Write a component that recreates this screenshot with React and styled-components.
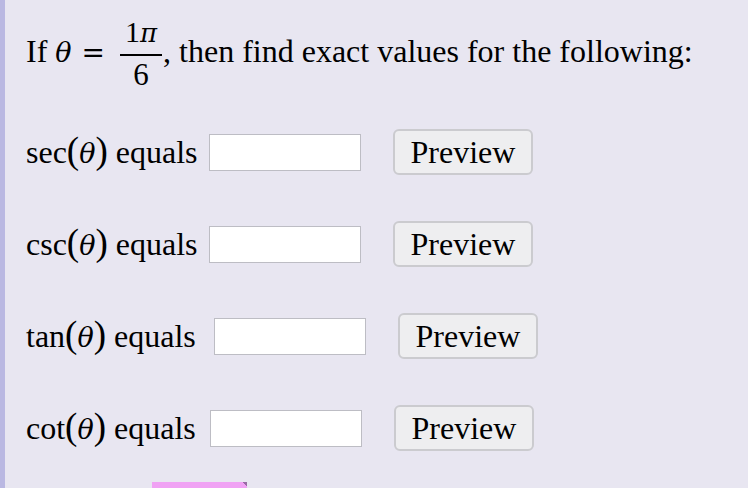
import React from "react";
import styled, { createGlobalStyle } from "styled-components";

const Global = createGlobalStyle`
  html, body {
    margin: 0;
    padding: 0;
    background: #e8e6f1;
    overflow: hidden;
  }
  body {
    font-family: "Liberation Serif", "Times New Roman", serif;
    color: #000;
  }
`;

const Page = styled.div`
  min-height: 100vh;
  box-sizing: border-box;
  border-left: 5px solid #bab8e2;
  padding: 19px 0 0 21px;
  font-size: 32px;
`;

const Title = styled.div`
  display: flex;
  align-items: center;
  white-space: nowrap;
`;

const Text = styled.span`
  padding-bottom: 7px;
`;

const Var = styled.i`
  font-family: "DejaVu Serif", "Liberation Serif", serif;
  font-style: italic;
  font-size: ${(p) => p.$size || 27}px;
`;

const Equals = styled.span`
  font-family: "DejaVu Serif", "Liberation Serif", serif;
  font-size: 28px;
  margin: 0 8px 0 10px;
`;

const Fraction = styled.span`
  display: inline-flex;
  flex-direction: column;
  align-items: stretch;
  margin: 0 1px 0 7px;
`;

const Num = styled.span`
  display: block;
  text-align: center;
  font-size: 30px;
  line-height: 26px;
  margin-bottom: 8px;
`;

const Bar = styled.span`
  display: block;
  height: 2px;
  width: 42px;
  background: #000;
`;

const Den = styled.span`
  display: block;
  text-align: center;
  font-size: 31px;
  line-height: 31px;
  margin-top: 3px;
`;

const List = styled.div`
  display: flex;
  flex-direction: column;
  gap: 46px;
  margin-top: 39px;
`;

const Row = styled.div`
  display: flex;
  align-items: center;
  height: 46px;
`;

const Label = styled.span`
  white-space: nowrap;
  min-width: ${(p) => p.$w}px;
`;

const Paren = styled.span`
  font-size: 37px;
  line-height: 0;
`;

const Input = styled.input`
  box-sizing: border-box;
  width: 152px;
  height: 37px;
  margin: 0 32px 0 11px;
  border: 1px solid #bdbdc4;
  background: #fff;
  outline: none;
  font: inherit;
  font-size: 20px;
`;

const Button = styled.button`
  box-sizing: border-box;
  width: 140px;
  height: 46px;
  padding: 0;
  border: 2px solid #cbcbcf;
  border-radius: 6px;
  background: #eeeef0;
  font-family: "Liberation Serif", "Times New Roman", serif;
  font-size: 32px;
  color: #000;
`;

const Submit = styled.div`
  width: 95px;
  height: 20px;
  margin: 31px 0 0 126px;
  background: linear-gradient(225deg, #9a6aa6 3px, transparent 3px), #f0a2f4;
`;

const rows = [
  { fn: "sec", w: 172 },
  { fn: "csc", w: 172 },
  { fn: "tan", w: 177 },
  { fn: "cot", w: 173 },
];

export default function App() {
  return (
    <>
      <Global />
      <Page>
        <Title>
          <Text>
            If <Var>θ</Var>
            <Equals>=</Equals>
          </Text>
          <Fraction>
            <Num>
              1<Var $size={26}>π</Var>
            </Num>
            <Bar />
            <Den>6</Den>
          </Fraction>
          <Text>, then find exact values for the following:</Text>
        </Title>
        <List>
          {rows.map(({ fn, w }) => (
            <Row key={fn}>
              <Label $w={w}>
                {fn}
                <Paren>(</Paren>
                <Var>θ</Var>
                <Paren>)</Paren> equals
              </Label>
              <Input type="text" />
              <Button type="button">Preview</Button>
            </Row>
          ))}
        </List>
        <Submit />
      </Page>
    </>
  );
}
